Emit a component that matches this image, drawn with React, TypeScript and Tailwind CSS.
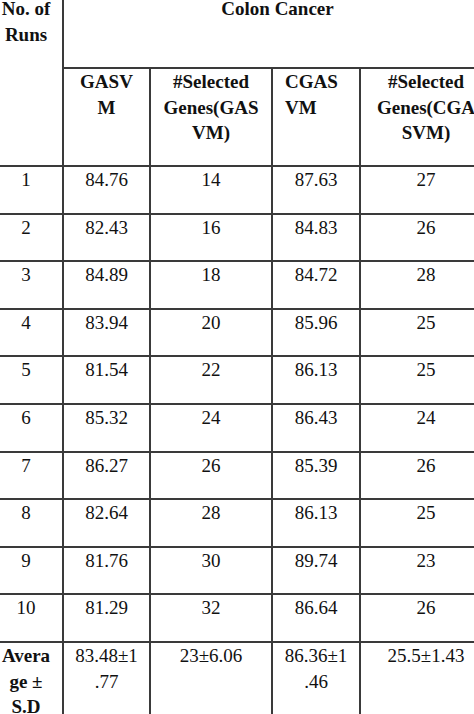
const rows: [string, string, string, string, string][] = [
  ['1', '84.76', '14', '87.63', '27'],
  ['2', '82.43', '16', '84.83', '26'],
  ['3', '84.89', '18', '84.72', '28'],
  ['4', '83.94', '20', '85.96', '25'],
  ['5', '81.54', '22', '86.13', '25'],
  ['6', '85.32', '24', '86.43', '24'],
  ['7', '86.27', '26', '85.39', '26'],
  ['8', '82.64', '28', '86.13', '25'],
  ['9', '81.76', '30', '89.74', '23'],
  ['10', '81.29', '32', '86.64', '26'],
];

const cell = 'border-2 border-[#3a3a3a] p-0 align-top text-center';

export default function App() {
  return (
    <div className="w-[474px] h-[714px] overflow-hidden bg-white [font-family:'Liberation_Serif','Times_New_Roman','DejaVu_Serif',serif]">
      <table className="table-fixed border-collapse -ml-[12px] -mt-[6px] w-[503px] text-[19px] leading-[25.7px] text-[#111] [font-family:'Liberation_Serif','Times_New_Roman','DejaVu_Serif',serif]">
        <colgroup>
          <col className="w-[74px]" />
          <col className="w-[87px]" />
          <col className="w-[122px]" />
          <col className="w-[88px]" />
          <col className="w-[132px]" />
        </colgroup>
        <thead>
          <tr className="h-[73px]">
            <th rowSpan={2} className={`${cell} font-bold`}>
              No. of
              <br />
              Runs
            </th>
            <th colSpan={4} className={`${cell} font-bold`}>
              Colon Cancer
            </th>
          </tr>
          <tr className="h-[98px]">
            <th className={`${cell} font-bold whitespace-nowrap`}>
              GASV
              <br />M
            </th>
            <th className={`${cell} font-bold whitespace-nowrap`}>
              #Selected
              <br />
              Genes(GAS
              <br />
              VM)
            </th>
            <th className={`${cell} font-bold whitespace-nowrap !text-left pl-[12px]`}>
              CGAS
              <br />
              VM
            </th>
            <th className={`${cell} font-bold whitespace-nowrap`}>
              #Selected
              <br />
              Genes(CGA
              <br />
              SVM)
            </th>
          </tr>
        </thead>
        <tbody>
          {rows.map((r) => (
            <tr key={r[0]} className="h-[47.6px]">
              {r.map((v, i) => (
                <td key={i} className={cell}>
                  {v}
                </td>
              ))}
            </tr>
          ))}
          <tr className="h-[90px]">
            <td className={`${cell} font-bold whitespace-nowrap`}>
              Avera
              <br />
              ge ±
              <br />
              S.D
            </td>
            <td className={`${cell} whitespace-nowrap`}>
              83.48±1
              <br />
              .77
            </td>
            <td className={cell}>23±6.06</td>
            <td className={`${cell} whitespace-nowrap`}>
              86.36±1
              <br />
              .46
            </td>
            <td className={cell}>25.5±1.43</td>
          </tr>
        </tbody>
      </table>
    </div>
  );
}
